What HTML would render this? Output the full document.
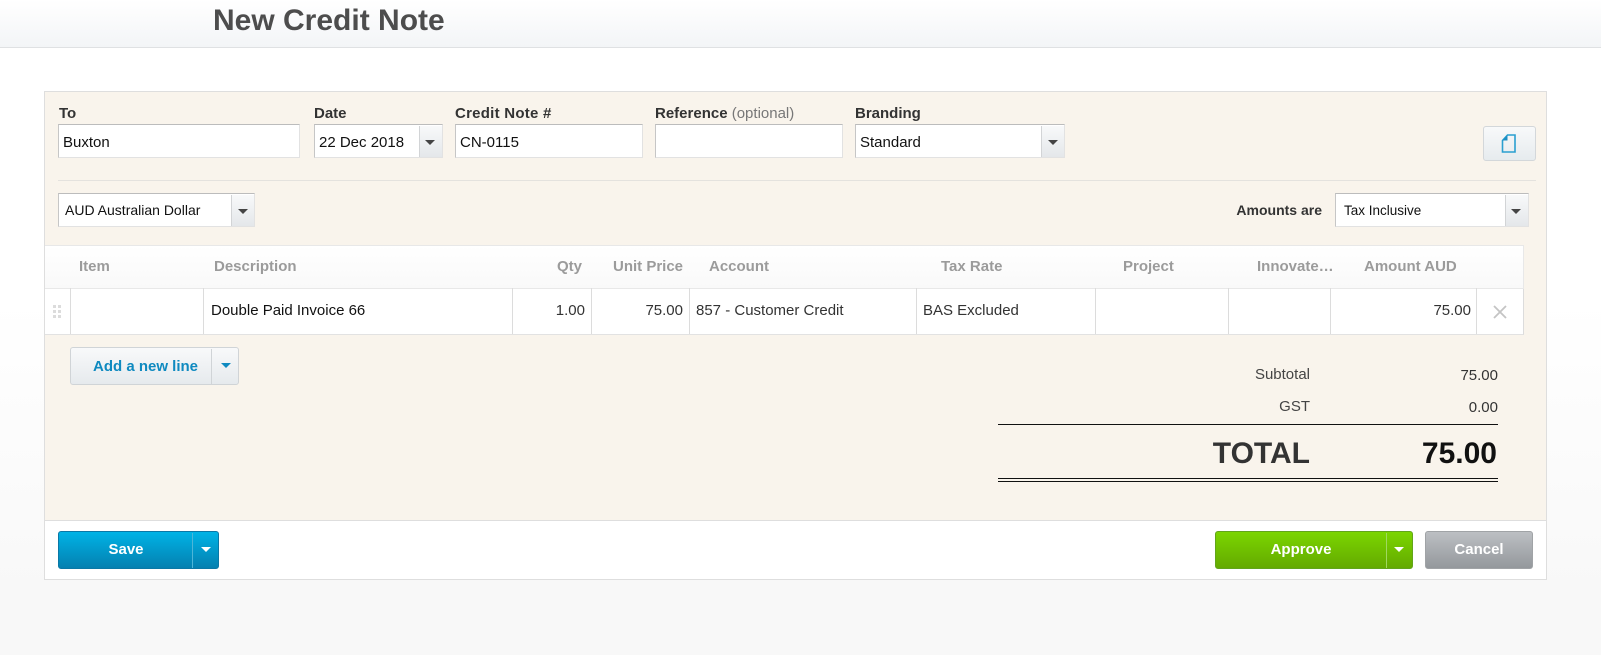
<!DOCTYPE html>
<html><head><meta charset="utf-8"><style>
*{box-sizing:border-box}
html,body{margin:0;padding:0}
body{width:1601px;height:655px;overflow:hidden;position:relative;background:linear-gradient(#fff 0,#fff 300px,#f8f8f8 600px);font-family:"Liberation Sans",sans-serif;font-size:15px;color:#111}
div,span.a{position:absolute;white-space:nowrap}
.hd{left:0;top:0;width:1601px;height:48px;background:linear-gradient(#fff,#f3f5f7);border-bottom:1px solid #dfe1e3}
.lb{font-weight:bold;color:#333;line-height:16px;top:106px}
.in{background:#fff;border:1px solid #e2e2e2;border-top:1px solid #bcbcbc;border-left:1px solid #c6c6c6;height:34px;line-height:35px;padding-left:4px}
.in.s{line-height:33px}
.dd{top:1px;bottom:0;right:0;width:23px;background:linear-gradient(#f8f9fa,#e4e7ea);border-left:1px solid #d2d4d6}
.ar{width:0;height:0;border-left:5px solid transparent;border-right:5px solid transparent;border-top:5px solid #444}
.th{top:246px;line-height:42px;font-weight:bold;color:#9b9b9b}
.td{top:289px;line-height:44px}
.v{top:288px;height:46px;width:1px;background:#dcdcdc}
.r{text-align:right}
.btn{top:531px;height:38px;border-radius:3px;color:#fff;font-weight:bold;text-align:center;line-height:35px}
</style></head><body>
<div class="hd"></div>
<div style="left:213px;top:3px;font-size:30px;font-weight:bold;color:#4d4d4d;line-height:36px">New Credit Note</div>

<div style="left:44px;top:91px;width:1503px;height:489px;background:#fff;border:1px solid #dedede"></div>
<div style="left:45px;top:92px;width:1501px;height:429px;background:#f9f4ec;border-bottom:1px solid #dedede"></div>

<div class="lb" style="left:59px">To</div>
<div class="in" style="left:58px;top:124px;width:242px">Buxton</div>
<div class="lb" style="left:314px">Date</div>
<div class="in" style="left:314px;top:124px;width:129px">22 Dec 2018<div class="dd"><div class="ar" style="left:5px;top:14px"></div></div></div>
<div class="lb" style="left:455px;letter-spacing:.25px">Credit Note #</div>
<div class="in" style="left:455px;top:124px;width:188px">CN-0115</div>
<div class="lb" style="left:655px">Reference <span style="font-weight:normal;color:#777">(optional)</span></div>
<div class="in" style="left:655px;top:124px;width:188px"></div>
<div class="lb" style="left:855px">Branding</div>
<div class="in" style="left:855px;top:124px;width:210px">Standard<div class="dd"><div class="ar" style="left:6px;top:14px"></div></div></div>

<div style="left:1483px;top:126px;width:53px;height:35px;border:1px solid #d3d7da;border-radius:3px;background:linear-gradient(#f8f9fa,#e6ebee)">
<svg width="16" height="20" style="position:absolute;left:17px;top:7px" viewBox="0 0 16 20"><path d="M1.5 6.5 L6.5 1 H14 V18 H1.5 Z" fill="none" stroke="#2a9fd0" stroke-width="1.6"/><path d="M1 6.5 L6.5 1 V6.5 Z" fill="#1b8fc4"/></svg>
</div>

<div style="left:58px;top:180px;width:1478px;height:1px;background:#e4e2de"></div>

<div class="in s" style="left:58px;top:193px;width:197px;padding-left:6px;font-size:14px">AUD Australian Dollar<div class="dd"><div class="ar" style="left:6px;top:14px"></div></div></div>
<div class="r" style="right:279px;top:202px;font-weight:bold;color:#333;line-height:16px;font-size:14px">Amounts are</div>
<div class="in s" style="left:1335px;top:193px;width:194px;padding-left:8px;font-size:13.5px">Tax Inclusive<div class="dd"><div class="ar" style="left:5px;top:14px"></div></div></div>

<div style="left:45px;top:245px;width:1479px;height:44px;background:linear-gradient(#fff,#f9f9f9);border:1px solid #e8e8e8;border-left:0"></div>
<div style="left:45px;top:289px;width:1479px;height:46px;background:#fff;border-bottom:1px solid #e2e2e2;border-right:1px solid #dcdcdc"></div>
<div class="th" style="left:79px">Item</div>
<div class="th" style="left:214px">Description</div>
<div class="th" style="left:557px">Qty</div>
<div class="th" style="left:613px">Unit Price</div>
<div class="th" style="left:709px">Account</div>
<div class="th" style="left:941px">Tax Rate</div>
<div class="th" style="left:1123px">Project</div>
<div class="th" style="left:1257px">Innovate…</div>
<div class="th" style="left:1364px">Amount AUD</div>

<div class="v" style="left:70px"></div><div class="v" style="left:203px"></div><div class="v" style="left:512px"></div><div class="v" style="left:591px"></div><div class="v" style="left:689px"></div><div class="v" style="left:916px"></div><div class="v" style="left:1095px"></div><div class="v" style="left:1228px"></div><div class="v" style="left:1330px"></div><div class="v" style="left:1476px"></div>

<svg width="10" height="14" style="position:absolute;left:53px;top:305px"><g fill="#dcdcdc"><rect x="0" y="0" width="3" height="3"/><rect x="5" y="0" width="3" height="3"/><rect x="0" y="5" width="3" height="3"/><rect x="5" y="5" width="3" height="3"/><rect x="0" y="10" width="3" height="3"/><rect x="5" y="10" width="3" height="3"/></g></svg>

<div class="td" style="left:211px">Double Paid Invoice 66</div>
<div class="td r" style="right:1016px;color:#333">1.00</div>
<div class="td r" style="right:918px;color:#333">75.00</div>
<div class="td" style="left:696px;color:#333">857 - Customer Credit</div>
<div class="td" style="left:923px;color:#333">BAS Excluded</div>
<div class="td r" style="right:130px;color:#333">75.00</div>
<svg width="14" height="14" style="position:absolute;left:1493px;top:305px"><path d="M1 1 L13 13 M13 1 L1 13" stroke="#c4c4c4" stroke-width="1.8"/></svg>

<div style="left:70px;top:347px;width:169px;height:38px;border:1px solid #d0d4d7;border-radius:3px;background:linear-gradient(#f8f9fa,#e6eaed)">
<div style="left:22px;top:0;line-height:37px;font-weight:bold;color:#0f8ac0">Add a new line</div>
<div style="left:140px;top:1px;bottom:0;width:1px;background:#d0d4d7"></div>
<div class="ar" style="left:150px;top:15px;border-top-color:#0f8ac0"></div>
</div>

<div class="r" style="right:291px;top:367px;line-height:16px;color:#444">Subtotal</div>
<div class="r" style="right:103px;top:368px;line-height:16px;color:#333">75.00</div>
<div class="r" style="right:291px;top:399px;line-height:16px;color:#444">GST</div>
<div class="r" style="right:103px;top:400px;line-height:16px;color:#333">0.00</div>
<div style="left:998px;top:424px;width:500px;height:1px;background:#111"></div>
<div class="r" style="right:291px;top:436px;font-size:30px;font-weight:bold;color:#333;line-height:36px">TOTAL</div>
<div class="r" style="right:104px;top:436px;font-size:30px;font-weight:bold;color:#111;line-height:36px">75.00</div>
<div style="left:998px;top:478px;width:500px;height:4px;border-top:1px solid #111;border-bottom:1px solid #111"></div>

<div class="btn" style="left:58px;width:161px;background:linear-gradient(#00b3e6,#0480b0);border:1px solid #0a78a6"><div style="left:0;width:134px;top:0">Save</div><div style="left:133px;top:1px;bottom:0;width:1px;background:#4db6d8"></div><div class="ar" style="left:142px;top:15px;border-top-color:#fff"></div></div>
<div class="btn" style="left:1215px;width:198px;background:linear-gradient(#7bd500,#64aa00);border:1px solid #62a51a"><div style="left:0;width:170px;top:0">Approve</div><div style="left:170px;top:1px;bottom:0;width:1px;background:#a0d860"></div><div class="ar" style="left:178px;top:15px;border-top-color:#fff"></div></div>
<div class="btn" style="left:1425px;width:108px;background:linear-gradient(#bcbfc3,#94989c);border:1px solid #a0a3a6">Cancel</div>
</body></html>
